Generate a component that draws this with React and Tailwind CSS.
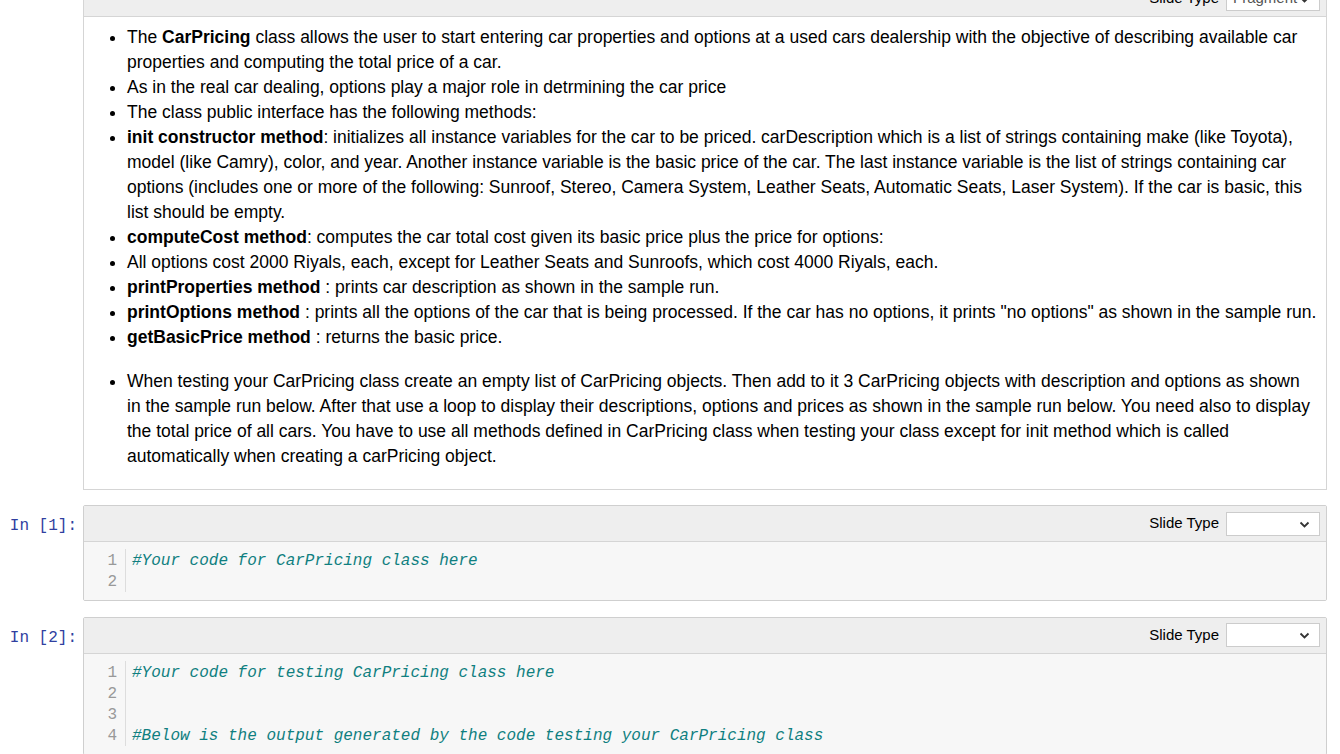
import React from "react";

const SlideType = ({ value }) => (
  <div className="flex items-center gap-[7px]">
    <span className="text-[15px] text-black">Slide Type</span>
    <div className="relative flex h-[24px] w-[94px] items-center border border-[#cccccc] bg-white pl-[6px] text-[15px] text-[#555]">
      {value}
      <svg className="absolute right-[9px] top-[8px]" width="11" height="8" viewBox="0 0 11 8" fill="none">
        <path d="M1.5 1.5L5.5 5.5L9.5 1.5" stroke="#333" strokeWidth="1.8" />
      </svg>
    </div>
  </div>
);

const B = ({ children }) => <span className="font-bold">{children}</span>;

const CodeCell = ({ n, lines }) => (
  <div className="flex">
    <div className="w-[83px] shrink-0 pr-[6px] pt-[9px] text-right font-['Liberation_Mono',monospace] text-[16px] text-[#303f9f]">
      In [{n}]:
    </div>
    <div className="mr-[13px] flex-1 overflow-hidden rounded-[2px] border border-[#cfcfcf]">
      <div className="flex h-[36px] items-center justify-end border-b border-[#d5d5d5] bg-[#eeeeee] pr-[6px]">
        <SlideType value="" />
      </div>
      <div className="flex bg-[#f7f7f7] pt-[7px] pb-[8px] font-['Liberation_Mono',monospace] text-[16px] leading-[21.3px]">
        <div className="w-[42px] shrink-0 border-r border-[#dddddd] pr-[8px] text-right text-[#999999]">
          {lines.map((_, i) => (
            <div key={i} className="pt-[2px] h-[21.3px]">{i + 1}</div>
          ))}
        </div>
        <div className="pl-[6px] italic text-[#0f7f80]">
          {lines.map((l, i) => (
            <div key={i} className="h-[21.3px] pt-[2px] whitespace-pre">{l}</div>
          ))}
        </div>
      </div>
    </div>
  </div>
);

export default function App() {
  return (
    <div className="min-h-[754px] bg-white font-['Liberation_Sans',Arial,sans-serif] text-black">
      <div className="ml-[83px] mr-[13px] mt-[-20px] border border-[#d5d5d5]">
        <div className="flex h-[36px] items-center justify-end border-b border-[#d5d5d5] bg-[#eeeeee] pr-[6px]">
          <SlideType value="Fragment" />
        </div>
        <div className="pb-[20px] pl-[43px] pr-[9px] pt-[8px] text-[17.5px] leading-[25px]">
          <ul className="list-disc">
            <li>The <B>CarPricing</B> class allows the user to start entering car properties and options at a used cars dealership with the objective of describing available car properties and computing the total price of a car.</li>
            <li>As in the real car dealing, options play a major role in detrmining the car price</li>
            <li>The class public interface has the following methods:</li>
            <li><B>init constructor method</B>: initializes all instance variables for the car to be priced. carDescription which is a list of strings containing make (like Toyota), model (like Camry), color, and year. Another instance variable is the basic price of the car. The last instance variable is the list of strings containing car options (includes one or more of the following: Sunroof, Stereo, Camera System, Leather Seats, Automatic Seats, Laser System). If the car is basic, this list should be empty.</li>
            <li><B>computeCost method</B>: computes the car total cost given its basic price plus the price for options:</li>
            <li>All options cost 2000 Riyals, each, except for Leather Seats and Sunroofs, which cost 4000 Riyals, each.</li>
            <li><B>printProperties method</B> : prints car description as shown in the sample run.</li>
            <li><B>printOptions method</B> : prints all the options of the car that is being processed. If the car has no options, it prints "no options" as shown in the sample run.</li>
            <li><B>getBasicPrice method</B> : returns the basic price.</li>
          </ul>
          <ul className="mt-[19px] list-disc">
            <li>When testing your CarPricing class create an empty list of CarPricing objects. Then add to it 3 CarPricing objects with description and options as shown in the sample run below. After that use a loop to display their descriptions, options and prices as shown in the sample run below. You need also to display the total price of all cars. You have to use all methods defined in CarPricing class when testing your class except for init method which is called automatically when creating a carPricing object.</li>
          </ul>
        </div>
      </div>
      <div className="mt-[15px]">
        <CodeCell n={1} lines={["#Your code for CarPricing class here", ""]} />
      </div>
      <div className="mt-[16px]">
        <CodeCell
          n={2}
          lines={[
            "#Your code for testing CarPricing class here",
            "",
            "",
            "#Below is the output generated by the code testing your CarPricing class",
          ]}
        />
      </div>
    </div>
  );
}
